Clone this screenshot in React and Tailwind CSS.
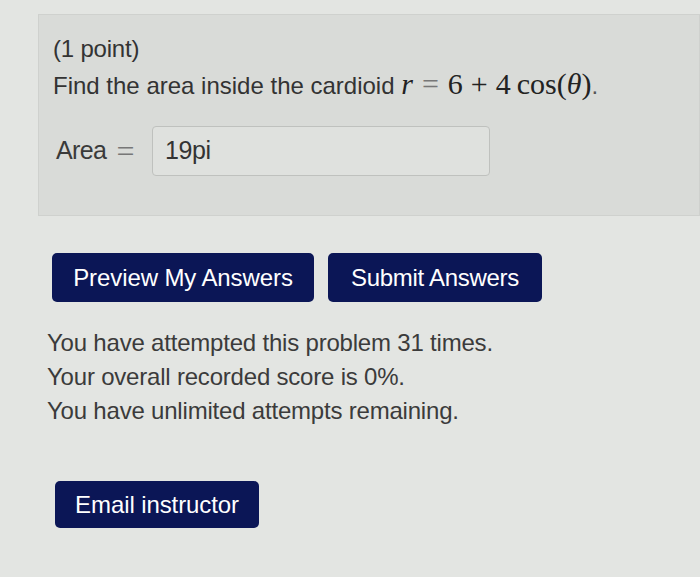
export default function App() {
  return (
    <div className="min-h-[577px] w-[700px] overflow-hidden bg-[#e3e5e2] pt-[14px] font-['Liberation_Sans',Arial,sans-serif] text-[#333]">
      <div className="ml-[38px] h-[202px] border border-[#cfd1ce] bg-[#d9dbd8] pl-[14px] pt-[20px]">
        <div className="text-[24px] leading-[28px] tracking-[-0.2px]">(1 point)</div>
        <div className="mt-[4px] flex items-baseline text-[24px] leading-[34px] tracking-[0px]">
          <span>Find the area inside the cardioid&nbsp;</span>
          <span className="font-['Liberation_Serif',serif] text-[30px] tracking-normal text-[#222]">
            <i>r</i>
            <span className="mx-[9px] text-[#777]">=</span>6<span className="mx-[8px]">+</span>4&#8201;cos(<i>θ</i>)
          </span>
          <span className="text-[#555]">.</span>
        </div>
        <div className="mt-[23px] flex items-center">
          <span className="ml-[3px] flex items-center text-[25px] tracking-[-0.6px] text-[#3a3a3a]">
            Area
            <span className="ml-[10px] font-['Liberation_Serif',serif] text-[32px] leading-none text-[#777]">=</span>
          </span>
          <div className="ml-[18px] flex h-[50px] w-[338px] items-center rounded-[4px] border border-[#bfc1be] bg-[#dfe1de] pl-[12px] text-[25px] tracking-[-0.4px] text-[#333]">
            19pi
          </div>
        </div>
      </div>

      <div className="ml-[52px] mt-[37px] flex gap-[14px]">
        <button className="h-[49px] w-[262px] rounded-[5px] bg-[#0b1656] text-[24px] tracking-[-0.1px] text-white">
          Preview My Answers
        </button>
        <button className="h-[49px] w-[214px] rounded-[5px] bg-[#0b1656] text-[24px] tracking-[-0.3px] text-white">
          Submit Answers
        </button>
      </div>

      <div className="ml-[47px] mt-[24px] text-[24px] leading-[34px] tracking-[-0.2px] text-[#3b3b3b]">
        <div>You have attempted this problem 31 times.</div>
        <div>Your overall recorded score is 0%.</div>
        <div>You have unlimited attempts remaining.</div>
      </div>

      <button className="ml-[55px] mt-[53px] h-[47px] w-[204px] rounded-[5px] bg-[#0b1656] text-[24px] tracking-[-0.1px] text-white">
        Email instructor
      </button>
    </div>
  );
}
